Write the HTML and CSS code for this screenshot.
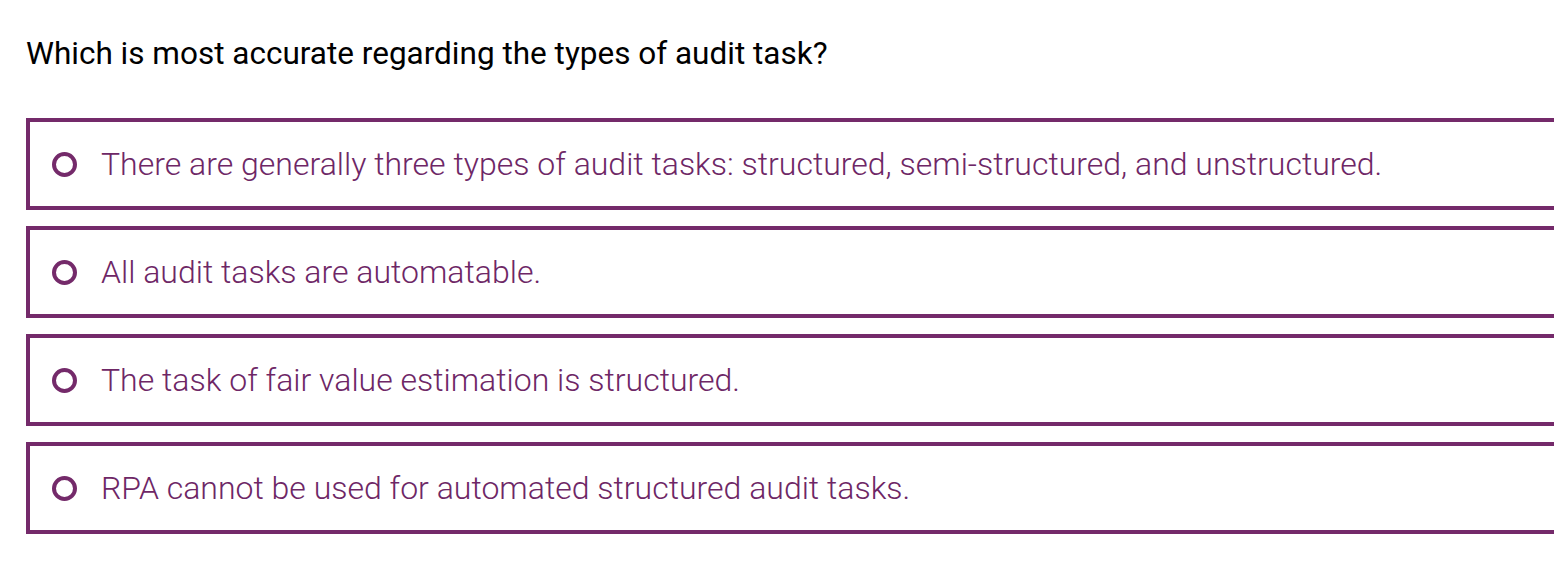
FILE: index.html
```html
<!DOCTYPE html>
<html>
<head>
<meta charset="utf-8">
<link rel="stylesheet" href="styles.css">
</head>
<body>
<div class="page">
  <h1 class="question">Which is most accurate regarding the types of audit task?</h1>
  <div class="options">
    <label class="option"><span class="radio"></span><span class="text">There are generally three types of audit tasks: structured, semi-structured, and unstructured.</span></label>
    <label class="option"><span class="radio"></span><span class="text">All audit tasks are automatable.</span></label>
    <label class="option"><span class="radio"></span><span class="text">The task of fair value estimation is structured.</span></label>
    <label class="option"><span class="radio"></span><span class="text">RPA cannot be used for automated structured audit tasks.</span></label>
  </div>
</div>
</body>
</html>
```

FILE: styles.css
```css
html, body {
  margin: 0;
  padding: 0;
  background: #fff;
  overflow: hidden;
}
.page {
  padding: 30px 0 0 26px;
  font-family: Roboto, "Liberation Sans", sans-serif;
  width: 1560px;
}
.question {
  margin: 0;
  font-size: 31.5px;
  font-weight: 400;
  line-height: 48px;
  color: #000;
}
.options {
  margin-top: 40px;
  display: flex;
  flex-direction: column;
  gap: 16px;
}
.option {
  display: flex;
  align-items: center;
  box-sizing: border-box;
  height: 92px;
  border: 4px solid #742a6a;
  padding-left: 22px;
}
.radio {
  width: 17px;
  height: 17px;
  border: 4.5px solid #742a6a;
  border-radius: 50%;
  filter: blur(0.7px);
  flex: none;
}
.text {
  margin-left: 24px;
  font-size: 32px;
  font-weight: 300;
  color: #6e2766;
}
```
